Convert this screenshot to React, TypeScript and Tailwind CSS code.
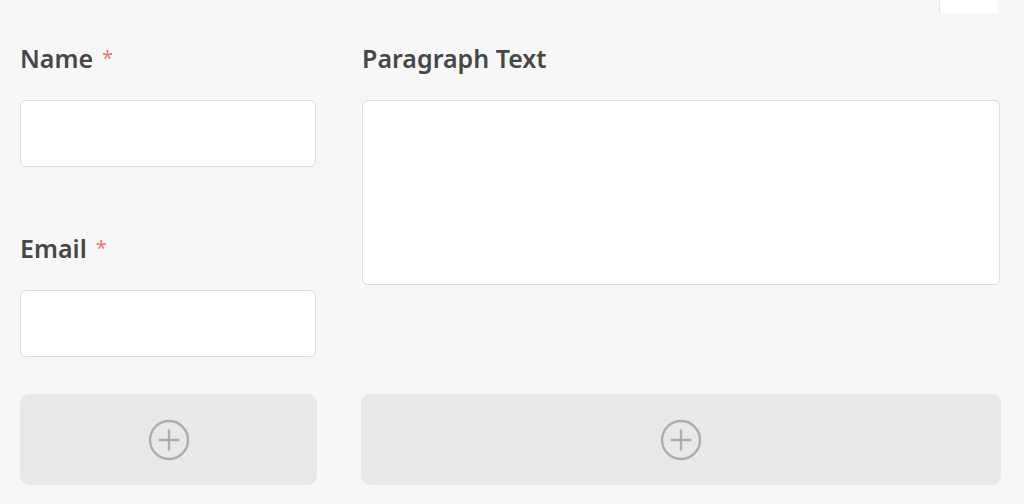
import { ReactNode } from 'react';

function Label({ children, required }: { children: ReactNode; required?: boolean }) {
  return (
    <div className="h-8 flex items-center text-[25px] font-[560] text-[#474747] leading-none -mt-[2px] mb-[2px]">
      <span>{children}</span>
      {required && <span className="ml-[9px] text-[20px] font-normal text-[#e07a76]">*</span>}
    </div>
  );
}

function AddBlock() {
  return (
    <div className="h-[91px] rounded-[9px] bg-[#e8e8e8] flex items-center justify-center">
      <svg width="42" height="42" viewBox="0 0 42 42" fill="none" stroke="#adadad" strokeWidth="2.4">
        <circle cx="21" cy="21" r="19" />
        <path d="M21 10.5v21M10.5 21h21" />
      </svg>
    </div>
  );
}

export default function App() {
  return (
    <div
      className="relative w-[1024px] h-[504px] bg-[#f7f7f7] overflow-hidden"
      style={{ fontFamily: '"Noto Sans", "Open Sans", sans-serif' }}
    >
      {/* leftover white strip at the top */}
      <div className="absolute top-0 left-[939px] w-[59px] h-[13px] bg-white border-l border-dotted border-[#cfcfcf]" />

      <div className="pl-5 pt-11 grid grid-cols-[297px_640px] gap-x-[44px] gap-y-[37px]">
        {/* left column */}
        <div className="flex flex-col">
          <Label required>Name</Label>
          <div className="mt-6 w-[296px] h-[67px] bg-white border border-[#dcdcdc] rounded-[6px]" />
          <div className="mt-[67px]">
            <Label required>Email</Label>
          </div>
          <div className="mt-6 w-[296px] h-[67px] bg-white border border-[#dcdcdc] rounded-[6px]" />
        </div>

        {/* right column */}
        <div className="flex flex-col pl-px">
          <Label>Paragraph Text</Label>
          <div className="mt-6 w-[638px] h-[185px] bg-white border border-[#dcdcdc] rounded-[6px]" />
        </div>

        <AddBlock />
        <AddBlock />
      </div>
    </div>
  );
}
